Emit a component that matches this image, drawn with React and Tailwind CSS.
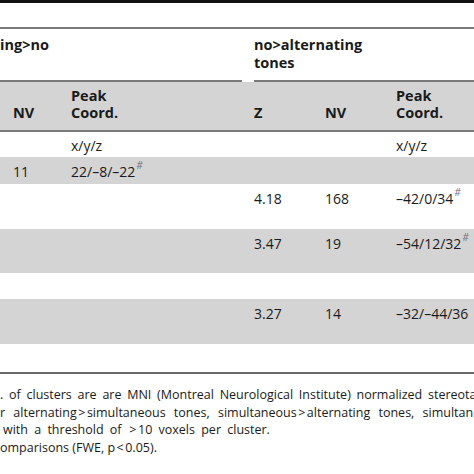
import React from 'react';

const cols = 'grid grid-cols-[13px_58px_183px_71px_71px_78px]';

const Sup = () => <sup className="text-[10px] italic text-gray-500 align-top relative top-[2px] ml-[1px]">#</sup>;

const Gt = () => <span className="mx-[1.5px]">&gt;</span>;
const Lt = () => <span className="mx-[1.5px]">&lt;</span>;

const rows = [
  { bg: 'bg-[#d4d4d4]', h: 'h-[27px]', cells: ['', '11', <>22/–8/–22<Sup /></>, '', '', ''] },
  { bg: 'bg-white', h: 'h-[45px]', cells: ['', '', '', '4.18', '168', <>–42/0/34<Sup /></>] },
  { bg: 'bg-[#d4d4d4]', h: 'h-[44px]', cells: ['', '', '', '3.47', '19', <>–54/12/32<Sup /></>] },
  { bg: 'bg-white', h: 'h-[26px]', cells: ['', '', '', '', '', ''] },
  { bg: 'bg-[#d4d4d4]', h: 'h-[45px]', cells: ['', '', '', '3.27', '14', '–32/–44/36'] },
  { bg: 'bg-white', h: 'h-[28px]', cells: ['', '', '', '', '', ''] },
];

const App = () => {
  return (
    <div className="w-[474px] h-[474px] overflow-hidden bg-white text-[#1a1a1a] text-[14px] leading-[17px]" style={{ fontFamily: '"Open Sans", "Noto Sans", sans-serif' }}>
      <div className="h-[3px] bg-[#111]" />
      <div className="h-[24px]" />
      <div className="h-[2px] bg-[#7a7a7a]" />
      <div className="flex h-[51px] font-bold text-[14.5px] leading-[18px] pt-[7px]">
        <div className="w-[242px] whitespace-nowrap">ing&gt;no</div>
        <div className="pl-[12px]">no&gt;alternating<br />tones</div>
      </div>
      <div className="flex h-[2px]">
        <div className="w-[242px] bg-[#7a7a7a]" />
        <div className="w-[12px] bg-white" />
        <div className="flex-1 bg-[#7a7a7a]" />
      </div>
      <div className={`${cols} h-[48px] bg-[#d4d4d4] font-bold text-[14.5px] items-end pb-[9px]`}>
        <div />
        <div>NV</div>
        <div>Peak<br />Coord.</div>
        <div>Z</div>
        <div>NV</div>
        <div>Peak<br />Coord.</div>
      </div>
      <div className="h-[2px] bg-[#7a7a7a]" />
      <div className={`${cols} h-[25px] bg-white pt-[5px]`}>
        <div /><div /><div>x/y/z</div><div /><div /><div>x/y/z</div>
      </div>
      {rows.map((r, i) => (
        <div key={i} className={`${cols} ${r.h} ${r.bg} pt-[6px]`}>
          {r.cells.map((c, j) => (
            <div key={j} className="whitespace-nowrap">{c}</div>
          ))}
        </div>
      ))}
      <div className="h-[2px] bg-[#6a6a6a]" />
      <div className="pt-[12px] text-[12.5px] leading-[17.7px] whitespace-nowrap">
        <div className="[word-spacing:2.5px]">. of clusters are are MNI (Montreal Neurological Institute) normalized stereotaxic</div>
        <div className="[word-spacing:5px]">r alternating<Gt />simultaneous tones, simultaneous<Gt />alternating tones, simultaneous</div>
        <div className="pl-[3px] [word-spacing:3px]">with a threshold of <Gt />10 voxels per cluster.</div>
        <div>omparisons (FWE, p<Lt />0.05).</div>
      </div>
    </div>
  );
};

export default App;
